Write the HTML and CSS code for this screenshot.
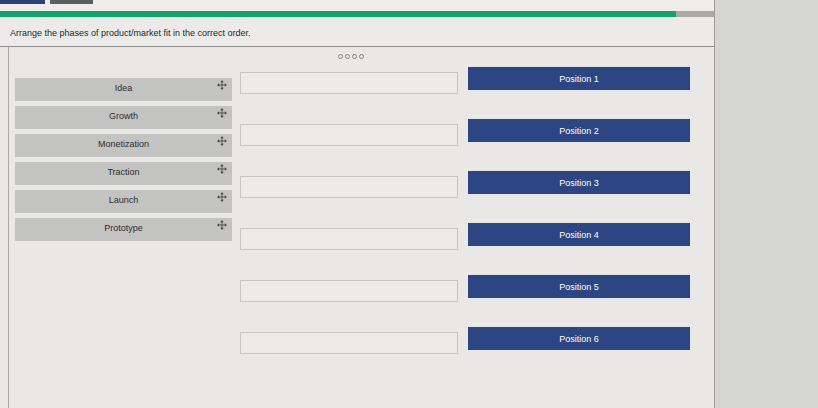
FILE: index.html
```html
<!DOCTYPE html>
<html lang="en">
<head>
<meta charset="utf-8">
<title>Product/market fit ordering</title>
<link rel="stylesheet" href="styles.css">
</head>
<body>
<div class="page">
  <div class="tabs">
    <span class="tab tab-primary"></span>
    <span class="tab tab-secondary"></span>
  </div>
  <div class="progress"><span class="progress-fill"></span></div>
  <div class="question">Arrange the phases of product/market fit in the correct order.</div>
  <div class="workspace">
    <div class="pager">
      <span class="dot"></span><span class="dot"></span><span class="dot"></span><span class="dot"></span>
    </div>
    <div class="board">
      <div class="pool">
        <div class="tile"><span class="tile-label">Idea</span><svg class="grip" viewBox="0 0 11 11"><path d="M5.5 2V9M2 5.5H9"/><path class="head" d="M5.5 0L3.6 2.4H7.4ZM5.5 11L3.6 8.6H7.4ZM0 5.5L2.4 3.6V7.4ZM11 5.5L8.6 3.6V7.4Z"/></svg></div>
        <div class="tile"><span class="tile-label">Growth</span><svg class="grip" viewBox="0 0 11 11"><path d="M5.5 2V9M2 5.5H9"/><path class="head" d="M5.5 0L3.6 2.4H7.4ZM5.5 11L3.6 8.6H7.4ZM0 5.5L2.4 3.6V7.4ZM11 5.5L8.6 3.6V7.4Z"/></svg></div>
        <div class="tile"><span class="tile-label">Monetization</span><svg class="grip" viewBox="0 0 11 11"><path d="M5.5 2V9M2 5.5H9"/><path class="head" d="M5.5 0L3.6 2.4H7.4ZM5.5 11L3.6 8.6H7.4ZM0 5.5L2.4 3.6V7.4ZM11 5.5L8.6 3.6V7.4Z"/></svg></div>
        <div class="tile"><span class="tile-label">Traction</span><svg class="grip" viewBox="0 0 11 11"><path d="M5.5 2V9M2 5.5H9"/><path class="head" d="M5.5 0L3.6 2.4H7.4ZM5.5 11L3.6 8.6H7.4ZM0 5.5L2.4 3.6V7.4ZM11 5.5L8.6 3.6V7.4Z"/></svg></div>
        <div class="tile"><span class="tile-label">Launch</span><svg class="grip" viewBox="0 0 11 11"><path d="M5.5 2V9M2 5.5H9"/><path class="head" d="M5.5 0L3.6 2.4H7.4ZM5.5 11L3.6 8.6H7.4ZM0 5.5L2.4 3.6V7.4ZM11 5.5L8.6 3.6V7.4Z"/></svg></div>
        <div class="tile"><span class="tile-label">Prototype</span><svg class="grip" viewBox="0 0 11 11"><path d="M5.5 2V9M2 5.5H9"/><path class="head" d="M5.5 0L3.6 2.4H7.4ZM5.5 11L3.6 8.6H7.4ZM0 5.5L2.4 3.6V7.4ZM11 5.5L8.6 3.6V7.4Z"/></svg></div>
      </div>
      <div class="slots">
        <div class="slot-row"><div class="drop"></div><div class="target">Position 1</div></div>
        <div class="slot-row"><div class="drop"></div><div class="target">Position 2</div></div>
        <div class="slot-row"><div class="drop"></div><div class="target">Position 3</div></div>
        <div class="slot-row"><div class="drop"></div><div class="target">Position 4</div></div>
        <div class="slot-row"><div class="drop"></div><div class="target">Position 5</div></div>
        <div class="slot-row"><div class="drop"></div><div class="target">Position 6</div></div>
      </div>
    </div>
  </div>
</div>
</body>
</html>
```

FILE: styles.css
```css
* {
  box-sizing: border-box;
}

html, body {
  margin: 0;
  width: 818px;
  height: 408px;
  overflow: hidden;
  background: #d5d5d3;
  font-family: "Liberation Sans", Arial, sans-serif;
  color: #2a2a2a;
}

.page {
  width: 715px;
  height: 408px;
  background: #e9e8e7;
  border-right: 1px solid #9c9c9c;
  display: flex;
  flex-direction: column;
}

/* top tab strip */
.tabs {
  height: 11px;
  display: flex;
  gap: 5px;
  align-items: flex-start;
  background: #efeeed;
}

.tab {
  display: block;
  height: 4px;
  width: 45px;
}

.tab-primary {
  background: #2f4272;
}

.tab-secondary {
  width: 43px;
  background: #5e5e5e;
}

/* progress bar */
.progress {
  height: 6px;
  background: #a9a9a9;
  display: flex;
}

.progress-fill {
  display: block;
  width: 676px;
  background: #14a26f;
}

.question {
  height: 30px;
  padding: 11px 0 0 10px;
  font-size: 9px;
  color: #1f1f1f;
  background: #ecebea;
  border-bottom: 1px solid #8e8e8e;
}

.workspace {
  flex: 1;
  margin-left: 8px;
  border-left: 1px solid #a8a8a8;
  display: flex;
  flex-direction: column;
}

/* page indicator */
.pager {
  height: 21px;
  display: flex;
  align-items: center;
  gap: 2px;
  padding: 0 0 3px 329px;
}

.dot {
  width: 5px;
  height: 5px;
  border-radius: 50%;
  border: 1px solid #858585;
}

/* drag & drop area */
.board {
  flex: 1;
  padding-left: 6px;
  display: flex;
  gap: 8px;
}

.pool {
  width: 217px;
  padding-top: 10px;
  display: flex;
  flex-direction: column;
  gap: 5px;
}

.tile {
  height: 23px;
  background: #c3c3c2;
  display: flex;
  align-items: center;
  justify-content: center;
  position: relative;
  font-size: 9px;
  color: #2e2e2e;
}

.tile-label {
  margin-top: -3px;
}

.grip {
  position: absolute;
  right: 5px;
  top: 2px;
  width: 10px;
  height: 10px;
}

.grip path {
  stroke: #4a4a4a;
  stroke-width: 1;
  fill: none;
}

.grip path.head {
  stroke: none;
  fill: #4a4a4a;
}

.slots {
  display: flex;
  flex-direction: column;
  gap: 28px;
}

.slot-row {
  height: 24px;
  display: flex;
  align-items: center;
  gap: 10px;
}

.drop {
  width: 218px;
  height: 22px;
  margin-top: 5px;
  border: 1px solid #c5c5c4;
  background: #ecebea;
}

.target {
  width: 222px;
  height: 23px;
  margin-top: -3px;
  background: #2c4684;
  color: #fff;
  font-size: 9px;
  display: flex;
  align-items: center;
  justify-content: center;
}
```
